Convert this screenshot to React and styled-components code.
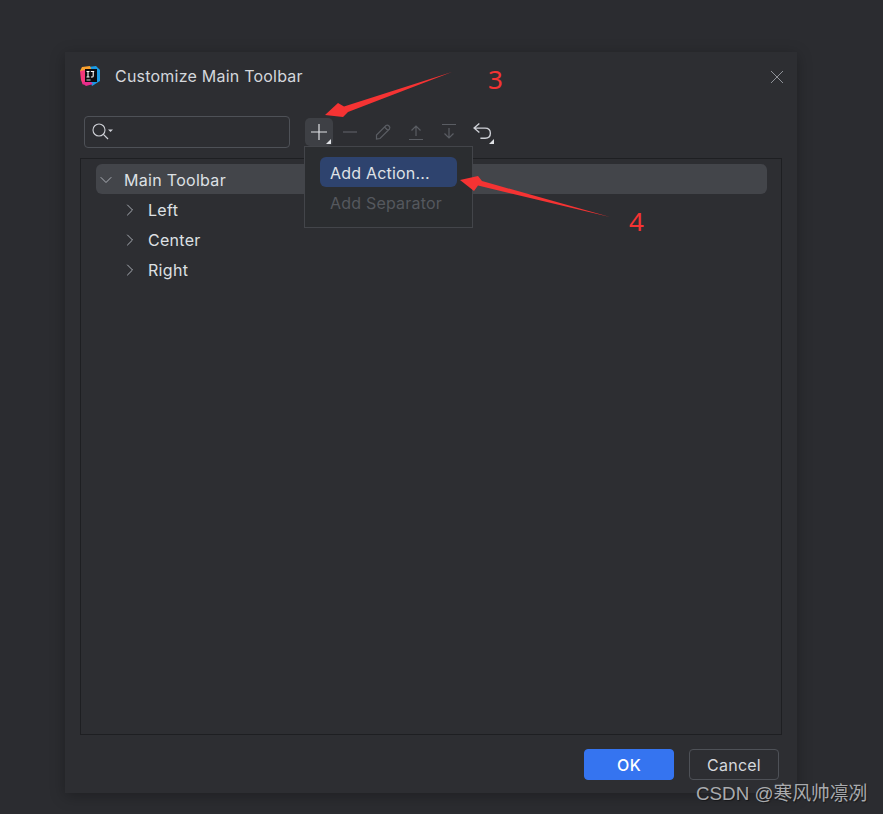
import styled, { createGlobalStyle } from 'styled-components'
import { ChevronDown, ChevronRight } from 'lucide-react'

const GlobalStyle = createGlobalStyle`
  html, body {
    margin: 0;
    padding: 0;
    background: #2b2c30;
  }
  body {
    font-family: Inter, "Noto Sans", sans-serif;
    color: #dfe1e5;
    overflow: hidden;
  }
`

const Page = styled.div`
  position: relative;
  width: 883px;
  height: 814px;
  padding: 52px 0 0 65px;
  box-sizing: border-box;
  background: #2b2c30;
`

const Dialog = styled.div`
  position: relative;
  width: 732px;
  height: 741px;
  display: flex;
  flex-direction: column;
  background: #2d2e32;
  box-shadow: 0 3px 14px rgba(0, 0, 0, 0.28);
`

const TitleBar = styled.div`
  display: flex;
  align-items: center;
  height: 48px;
  padding: 0 12px 0 15px;
  font-size: 16px;
  letter-spacing: 0.22px;
  color: #d4d7dc;
`

const Title = styled.span`
  margin-left: 15px;
  flex: 1;
`

const Toolbar = styled.div`
  display: flex;
  align-items: center;
  height: 32px;
  margin-top: 16px;
  padding-left: 19px;
`

const SearchBox = styled.div`
  width: 206px;
  height: 32px;
  box-sizing: border-box;
  display: flex;
  align-items: center;
  padding-left: 7px;
  margin-right: 15px;
  border: 1px solid #4e5157;
  border-radius: 4px;
`

const ToolButton = styled.div`
  position: relative;
  width: 28px;
  height: 28px;
  margin-right: ${(p) => p.$gap ?? 5}px;
  display: flex;
  align-items: center;
  justify-content: center;
  border-radius: 5px;
  background: ${(p) => (p.$active ? '#3e4045' : 'transparent')};
`

const Corner = styled.span`
  position: absolute;
  right: 2px;
  bottom: 2px;
  width: 0;
  height: 0;
  border-left: 5px solid transparent;
  border-bottom: 5px solid #dfe1e5;
`

const TreePanel = styled.div`
  margin: 10px 15px 0;
  height: 577px;
  box-sizing: border-box;
  padding: 5px 14px 0 15px;
  border: 1px solid #1e1f22;
`

const Row = styled.div`
  display: flex;
  align-items: center;
  height: 30px;
  box-sizing: border-box;
  padding-top: 1px;
  padding-left: ${(p) => p.$indent}px;
  font-size: 16px;
  letter-spacing: 0.3px;
  color: #dde0e4;
  border-radius: 6px;
  background: ${(p) => (p.$selected ? '#43454a' : 'transparent')};
`

const RowArrow = styled.span`
  display: flex;
  width: 28px;
  color: #b4b8bf;
`

const Footer = styled.div`
  display: flex;
  justify-content: flex-end;
  gap: 15px;
  margin-top: 14px;
  padding-right: 18px;
`

const Button = styled.div`
  width: 90px;
  height: 31px;
  box-sizing: border-box;
  padding-top: 1px;
  display: flex;
  align-items: center;
  justify-content: center;
  font-size: 16px;
  letter-spacing: 0.25px;
  border-radius: 4px;
  color: ${(p) => (p.$primary ? '#ffffff' : '#d5d8dd')};
  font-weight: ${(p) => (p.$primary ? 500 : 400)};
  background: ${(p) => (p.$primary ? '#3574f0' : 'transparent')};
  border: 1px solid ${(p) => (p.$primary ? '#3574f0' : '#4e5157')};
`

const PopupMenu = styled.div`
  position: absolute;
  left: 239px;
  top: 94px;
  width: 169px;
  height: 82px;
  box-sizing: border-box;
  padding: 10px 15px;
  background: #2b2d30;
  border: 1px solid #43454a;
`

const MenuItem = styled.div`
  height: 30px;
  width: 137px;
  display: flex;
  align-items: center;
  padding: 1px 0 0 10px;
  box-sizing: border-box;
  font-size: 16px;
  letter-spacing: 0.2px;
  border-radius: 6px;
  color: ${(p) => (p.$disabled ? '#55585e' : '#dfe1e5')};
  background: ${(p) => (p.$active ? '#2e436e' : 'transparent')};
`

const Annotations = styled.svg`
  position: absolute;
  left: 0;
  top: 0;
  pointer-events: none;
`

const StepNumber = styled.span`
  position: absolute;
  left: ${(p) => p.$x}px;
  top: ${(p) => p.$y}px;
  font-family: "Noto Sans", sans-serif;
  font-size: 26px;
  line-height: 30px;
  color: #f53333;
`

const Watermark = styled.span`
  position: absolute;
  left: 696px;
  top: 782px;
  font-family: "Liberation Sans", "Noto Sans CJK SC", sans-serif;
  font-size: 18.8px;
  line-height: 24px;
  white-space: nowrap;
  color: #a9abae;
  text-shadow: 1px 1px 1px rgba(0, 0, 0, 0.45);
`

const CloseSvg = styled.svg`
  margin-top: 2px;
`

const AppLogo = () => (
  <svg width="20" height="20" viewBox="0 0 20 20">
    <path d="M8 1 L16 0 L20 4 L20 15 L12 20 L9 12 Z" fill="#1a9be6" />
    <path d="M2 1 L10 0 L12 5 L4 9 L0 5 Z" fill="#f9a12e" />
    <path d="M0 5 L5 4 L7 14 L3 19 L1 14 Z" fill="#f7387a" />
    <path d="M2 17 L8 13 L13 18 L6 20 Z" fill="#e82c8c" />
    <rect x="5" y="3" width="12" height="13" fill="#0b0b0f" />
    <path d="M6.5 5.5 h3 M8 5.5 v5.5 M6.5 11 h3 M10.8 5.5 h3.4 M13.2 5.5 v4.4 q0 1.1 -1.1 1.1 h-1.2" stroke="#fff" strokeWidth="1.1" fill="none" />
    <rect x="6.5" y="13.5" width="4" height="1" fill="#d8d8d8" />
  </svg>
)

const SearchIcon = () => (
  <svg width="24" height="18" viewBox="0 0 24 18" fill="none">
    <circle cx="7" cy="7" r="6" stroke="#ced0d6" strokeWidth="1.1" />
    <path d="M11.4 11.4 L16 16" stroke="#ced0d6" strokeWidth="1.2" />
    <path d="M16 6.5 h5 l-2.5 2.6 z" fill="#ced0d6" />
  </svg>
)

const Icon = ({ children, color = '#5a5d63', size = 20, stroke = 1.2 }) => (
  <svg width={size} height={size} viewBox="0 0 20 20" fill="none" stroke={color} strokeWidth={stroke}>
    {children}
  </svg>
)

const CloseIcon = () => (
  <CloseSvg width="16" height="16" viewBox="0 0 16 16" fill="none" stroke="#8f9298" strokeWidth="1">
    <path d="M2 2 L14 14 M14 2 L2 14" />
  </CloseSvg>
)

const treeItems = ['Left', 'Center', 'Right']

const App = () => (
  <Page>
    <GlobalStyle />
    <Dialog>
      <TitleBar>
        <AppLogo />
        <Title>Customize Main Toolbar</Title>
        <CloseIcon />
      </TitleBar>
      <Toolbar>
        <SearchBox>
          <SearchIcon />
        </SearchBox>
        <ToolButton $active $gap={3}>
          <Icon color="#dfe1e5">
            <path d="M10 2 V18 M2 10 H18" />
          </Icon>
          <Corner />
        </ToolButton>
        <ToolButton>
          <Icon>
            <path d="M3 10 H17" />
          </Icon>
        </ToolButton>
        <ToolButton>
          <Icon>
            <path d="M3.5 17 L3.5 13 L13 3.5 Q14.5 2.5 16 4 Q17.5 5.5 16.5 7 L7 16.5 Z M11.5 5 L15 8.5" />
          </Icon>
        </ToolButton>
        <ToolButton>
          <Icon>
            <path d="M3 17.5 H17 M10 14 V4 M5.5 8.5 L10 4 L14.5 8.5" />
          </Icon>
        </ToolButton>
        <ToolButton>
          <Icon>
            <path d="M3 2.5 H17 M10 6 V16 M5.5 11.5 L10 16 L14.5 11.5" />
          </Icon>
        </ToolButton>
        <ToolButton>
          <Icon color="#ced0d6" size={21} stroke={1.3}>
            <path d="M7 1.5 L2 5.8 L7 10 M2 5.8 H12.5 Q17.5 5.8 17.5 10.8 Q17.5 15.5 12.5 15.5 H8" />
          </Icon>
          <Corner />
        </ToolButton>
      </Toolbar>
      <TreePanel>
        <Row $selected $indent={0}>
          <RowArrow>
            <ChevronDown size={20} strokeWidth={1.1} />
          </RowArrow>
          Main Toolbar
        </Row>
        {treeItems.map((item) => (
          <Row key={item} $indent={24}>
            <RowArrow>
              <ChevronRight size={20} strokeWidth={1.1} />
            </RowArrow>
            {item}
          </Row>
        ))}
      </TreePanel>
      <Footer>
        <Button $primary>OK</Button>
        <Button>Cancel</Button>
      </Footer>
      <PopupMenu>
        <MenuItem $active>Add Action...</MenuItem>
        <MenuItem $disabled>Add Separator</MenuItem>
      </PopupMenu>
    </Dialog>
    <Annotations width="883" height="814" viewBox="0 0 883 814">
      <polygon points="452,72 344,106.5 338,103 325,115 343,117 348,112" fill="#f53333" />
      <polygon points="610,217 482,181 478,176 460,180 474,191 478,185.5" fill="#f53333" />
    </Annotations>
    <StepNumber $x={488} $y={64}>3</StepNumber>
    <StepNumber $x={629} $y={206}>4</StepNumber>
    <Watermark>CSDN @寒风帅凛冽</Watermark>
  </Page>
)

export default App
